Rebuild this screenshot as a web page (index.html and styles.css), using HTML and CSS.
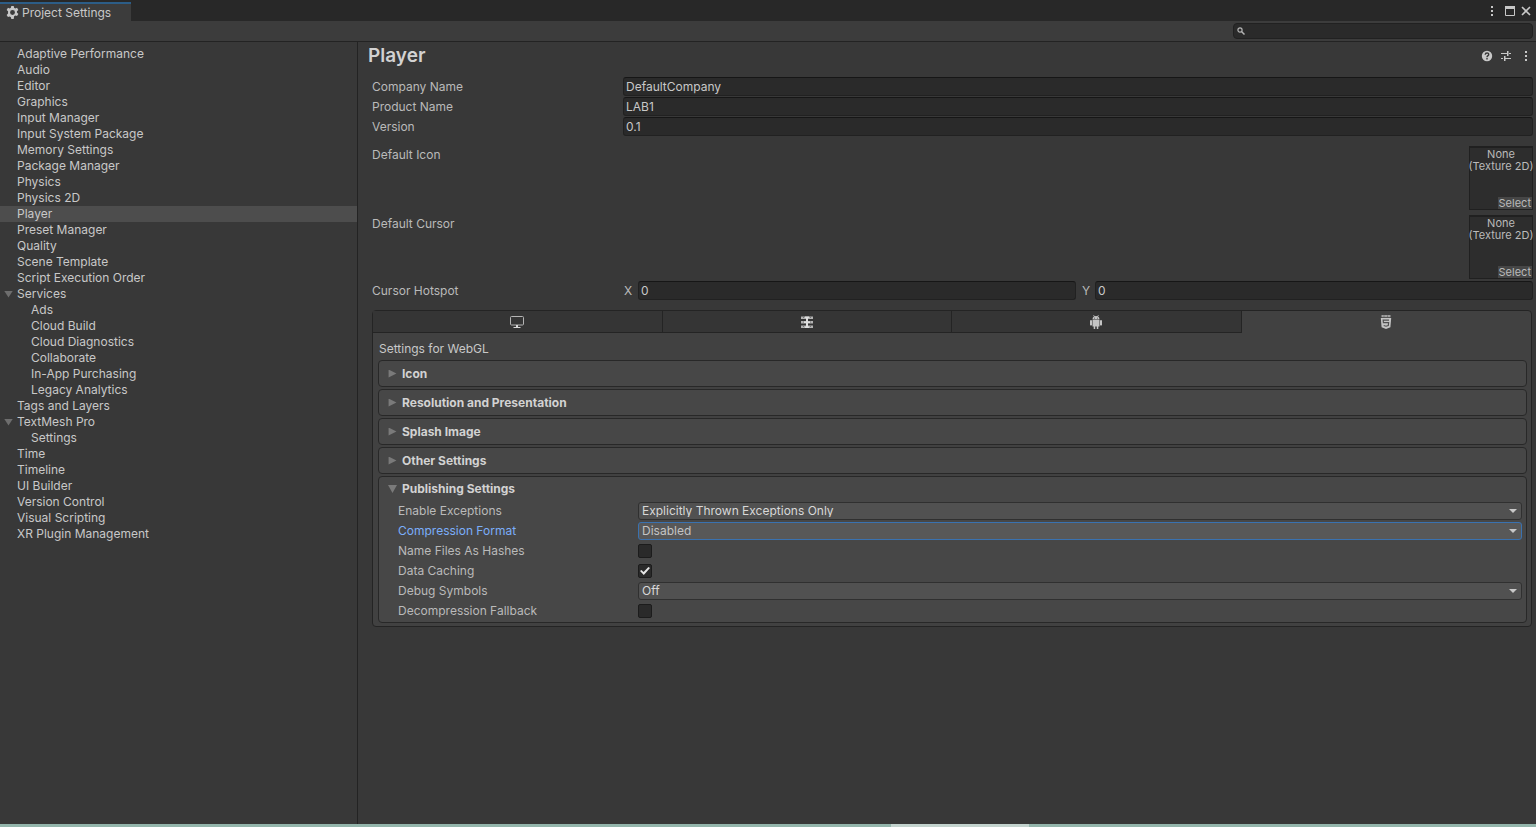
FILE: index.html
```
<!DOCTYPE html>
<html lang="en">
<head>
	<meta charset="UTF-8">
	<title>Project Settings</title>
	<link rel="stylesheet" href="styles.css">
</head>
<body>
	<header class="titlebar">
		<div class="window-tab">
			<svg width="13" height="13" viewBox="0 0 12 12"><path fill="#c8c8c8" fill-rule="evenodd" d="M4.9 0h2.2l.4 1.7 1 .5 1.7-.6 1.2 2-1.3 1.2v1.2l1.3 1.3-1.2 2-1.7-.5-1 .6L7.100 12H4.900l-.4-1.700-1-.6-1.700.5-1.200-2L1.900 6.900V4.800L.6 3.600l1.200-2 1.700.6 1-.5zM6 3.700a2.200 2.200 0 1 0 0 4.500 2.200 2.200 0 0 0 0-4.500z"/></svg>
			<span>Project Settings</span>
		</div>
		<div class="window-buttons">
			<button aria-label="Menu"><svg width="4" height="12" viewBox="0 0 4 12"><path fill="#c8c8c8" d="M1 1h2v2H1zM1 5h2v2H1zM1 9h2v2H1z"/></svg></button>
			<button aria-label="Maximize"><svg width="12" height="12" viewBox="0 0 12 12"><path fill="none" stroke="#c8c8c8" d="M1.500 1.500h9v9h-9z"/><path fill="#c8c8c8" d="M1 1h10v3H1z"/></svg></button>
			<button aria-label="Close"><svg width="10" height="10" viewBox="0 0 10 10"><path stroke="#c8c8c8" stroke-width="1.600" d="M1 1l8 8M9 1L1 9"/></svg></button>
		</div>
	</header>
	<div class="toolbar">
		<label class="search">
			<svg width="8" height="8" viewBox="0 0 8 8"><circle cx="3" cy="3" r="2.100" fill="none" stroke="#b4b4b4" stroke-width="1.200"/><path stroke="#b4b4b4" stroke-width="1.500" d="M4.500 4.500l3 3"/></svg>
			<input type="text" aria-label="Search">
		</label>
	</div>
	<div class="content">
		<nav class="sidebar">
			<a href="#">Adaptive Performance</a>
			<a href="#">Audio</a>
			<a href="#">Editor</a>
			<a href="#">Graphics</a>
			<a href="#">Input Manager</a>
			<a href="#">Input System Package</a>
			<a href="#">Memory Settings</a>
			<a href="#">Package Manager</a>
			<a href="#">Physics</a>
			<a href="#">Physics 2D</a>
			<a href="#" class="selected">Player</a>
			<a href="#">Preset Manager</a>
			<a href="#">Quality</a>
			<a href="#">Scene Template</a>
			<a href="#">Script Execution Order</a>
			<a href="#" class="group">Services</a>
			<a href="#" class="child">Ads</a>
			<a href="#" class="child">Cloud Build</a>
			<a href="#" class="child">Cloud Diagnostics</a>
			<a href="#" class="child">Collaborate</a>
			<a href="#" class="child">In-App Purchasing</a>
			<a href="#" class="child">Legacy Analytics</a>
			<a href="#">Tags and Layers</a>
			<a href="#" class="group">TextMesh Pro</a>
			<a href="#" class="child">Settings</a>
			<a href="#">Time</a>
			<a href="#">Timeline</a>
			<a href="#">UI Builder</a>
			<a href="#">Version Control</a>
			<a href="#">Visual Scripting</a>
			<a href="#">XR Plugin Management</a>
		</nav>
		<main class="inspector">
			<div class="heading">
				<h1>Player</h1>
				<div class="heading-buttons">
					<button aria-label="Help"><svg width="12" height="12" viewBox="0 0 12 12"><circle cx="6" cy="6" r="5.200" fill="#c8c8c8"/><path fill="none" stroke="#383838" stroke-width="1.400" d="M4.200 4.700C4.300 2.300 7.800 2.400 7.700 4.600 7.600 5.600 6 5.700 6 7.200"/><path fill="#383838" d="M5.300 8h1.400v1.400H5.300z"/></svg></button>
					<button aria-label="Presets"><svg width="12" height="12" viewBox="0 0 12 12"><path fill="#c8c8c8" d="M1 3h6v1H1zM7 1h1.500v5H7zM9 3h2v1H9zM1 8h2v1H1zM4 6h1.500v5H4zM5 8h6v1H5z"/></svg></button>
					<button aria-label="More"><svg width="4" height="12" viewBox="0 0 4 12"><path fill="#c8c8c8" d="M1 1h2v2H1zM1 5h2v2H1zM1 9h2v2H1z"/></svg></button>
				</div>
			</div>
			<div class="fields">
				<div class="row">
					<label for="company">Company Name</label>
					<input type="text" id="company" value="DefaultCompany">
				</div>
				<div class="row">
					<label for="product">Product Name</label>
					<input type="text" id="product" value="LAB1">
				</div>
				<div class="row">
					<label for="version">Version</label>
					<input type="text" id="version" value="0.1">
				</div>
				<div class="row texture-row icon-row">
					<span>Default Icon</span>
					<div class="texture"><span>None<br>(Texture 2D)</span><button>Select</button></div>
				</div>
				<div class="row texture-row cursor-row">
					<span>Default Cursor</span>
					<div class="texture"><span>None<br>(Texture 2D)</span><button>Select</button></div>
				</div>
				<div class="row">
					<span>Cursor Hotspot</span>
					<div class="vector">
						<label for="hotspot-x">X</label>
						<input type="text" id="hotspot-x" value="0">
						<label for="hotspot-y" class="second">Y</label>
						<input type="text" id="hotspot-y" value="0">
					</div>
				</div>
			</div>
			<section class="platforms">
				<div class="platform-tabs">
					<button aria-label="Standalone"><svg width="16" height="14" viewBox="0 0 16 14"><rect x="1.500" y="1.500" width="13" height="8.500" rx="1" fill="none" stroke="#b4b4b4"/><path fill="#d8d8d8" d="M7 10h2v2h2.500v1h-7v-1H7z"/></svg></button>
					<button aria-label="Dedicated Server"><svg width="14" height="14" viewBox="0 0 14 14"><path fill="#b4b4b4" d="M1 1.500h12v2.500H1zM1 6h12v2.500H1zM1 10.500h12V13H1z"/><path fill="#dedede" d="M5 1.500h4v1.500H8v8.500h1V13H5v-1.500h1V3H5zM4 6.500h6v1.500H4z"/><path fill="#777" d="M3 2h1v1H3zM10 2h1v1h-1zM3 6.500h1v1H3zM10 6.500h1v1h-1zM3 11h1v1H3zM10 11h1v1h-1z"/></svg></button>
					<button aria-label="Android"><svg width="14" height="16" viewBox="0 0 14 16"><path fill="#c4c4c4" d="M3.500 5.500C3.500 3.800 4.200 3 5 2.500L4.200 1.200l.6-.3.9 1.400a4 4 0 0 1 2.600 0L9.200.9l.6.3L9 2.500c.8.5 1.500 1.300 1.500 3zM3.500 6h7v6.500H9.300V15H7.800v-2.500H6.200V15H4.700v-2.500H3.500zM1 6.500q1-1 2 0V11q-1 1-2 0zM11 6.500q1-1 2 0V11q-1 1-2 0z"/><path fill="#444" d="M5 3.800h1v.8H5zM8 3.800h1v.8H8z"/></svg></button>
					<button class="active" aria-label="WebGL"><svg width="12" height="16" viewBox="0 0 12 16"><path fill="#a0a0a0" d="M1.500 1h9v2.200h-9z"/><path fill="#6a6a6a" d="M3.500 1.500h1v1.200h-1zM7 1.500h1v1.200H7z"/><path fill="#c4c4c4" d="M.8 4h10.400l-.8 9.200L6 15l-4.400-1.800z"/><path fill="none" stroke="#505050" stroke-width="1.200" d="M9 6.200H3.200l.2 2.500h5.200l-.3 2.800L6 12.200l-2.300-.7"/></svg></button>
				</div>
				<div class="platform-body">
					<h2>Settings for WebGL</h2>
					<details>
						<summary>Icon</summary>
					</details>
					<details>
						<summary>Resolution and Presentation</summary>
					</details>
					<details>
						<summary>Splash Image</summary>
					</details>
					<details>
						<summary>Other Settings</summary>
					</details>
					<details open>
						<summary>Publishing Settings</summary>
						<div class="publishing">
							<div class="option">
								<label for="exceptions">Enable Exceptions</label>
								<div class="dropdown"><select id="exceptions"><option>Explicitly Thrown Exceptions Only</option></select></div>
							</div>
							<div class="option focused">
								<label for="compression">Compression Format</label>
								<div class="dropdown"><select id="compression"><option>Disabled</option></select></div>
							</div>
							<div class="option">
								<label for="hashes">Name Files As Hashes</label>
								<input type="checkbox" id="hashes">
							</div>
							<div class="option">
								<label for="caching">Data Caching</label>
								<input type="checkbox" id="caching" checked>
							</div>
							<div class="option">
								<label for="symbols">Debug Symbols</label>
								<div class="dropdown"><select id="symbols"><option>Off</option></select></div>
							</div>
							<div class="option">
								<label for="fallback">Decompression Fallback</label>
								<input type="checkbox" id="fallback">
							</div>
						</div>
					</details>
				</div>
			</section>
		</main>
	</div>
	<footer class="desktop-edge"></footer>
</body>
</html>
```
FILE: styles.css
```
* {
	box-sizing: border-box;
}
body {
	margin: 0;
	min-height: 100vh;
	display: flex;
	flex-direction: column;
	background-color: #383838;
	color: #c8c8c8;
	font-family: Inter, "Liberation Sans", sans-serif;
	font-size: 12px;
	line-height: 16px;
}
button, input, select {
	font: inherit;
	color: inherit;
	margin: 0;
}
button {
	padding: 0;
	border: none;
	background: none;
}
svg {
	display: block;
}

/* window frame */
.titlebar {
	display: flex;
	justify-content: space-between;
	height: 21px;
	background-color: #282828;
}
.window-tab {
	display: flex;
	align-items: center;
	gap: 3px;
	margin-top: 2px;
	padding: 0 20px 0 6px;
	border-top: 2px solid #2c5d87;
	background-color: #3c3c3c;
}
.window-buttons {
	display: flex;
	align-items: center;
	gap: 10px;
	padding-right: 5px;
}
.window-buttons button:last-child {
	margin-left: -5px;
}
.toolbar {
	display: flex;
	justify-content: flex-end;
	height: 21px;
	padding: 2px 3px 2px 0;
	background-color: #3c3c3c;
	border-bottom: 1px solid #232323;
}
.search {
	display: flex;
	align-items: center;
	gap: 4px;
	width: 300px;
	height: 16px;
	padding: 0 3px;
	background-color: #2a2a2a;
	border: 1px solid #212121;
	border-radius: 4px;
}
.search input {
	flex: 1;
	min-width: 0;
	height: 12px;
	padding: 0;
	border: none;
	outline: none;
	background: none;
}
.content {
	flex: 1;
	display: flex;
}
.desktop-edge {
	height: 3px;
	background: linear-gradient(90deg, #93b5ab 58%, #c3d3ce 58%, #c3d3ce 67%, #93b5ab 67%);
}

/* category list */
.sidebar {
	flex: 0 0 358px;
	padding-top: 4px;
	border-right: 1px solid #232323;
}
.sidebar a {
	display: block;
	padding-left: 17px;
	color: #c8c8c8;
	text-decoration: none;
}
.sidebar .selected {
	background-color: #4d4d4d;
}
.sidebar .child {
	padding-left: 31px;
}
.sidebar .group {
	display: flex;
	align-items: center;
	gap: 4px;
	padding-left: 4px;
}
.sidebar .group::before {
	content: "";
	width: 9px;
	height: 7px;
	background-color: #6e6e6e;
	clip-path: polygon(0 0, 100% 0, 50% 100%);
}

/* player settings */
.inspector {
	flex: 1;
	min-width: 0;
}
.heading {
	display: flex;
	justify-content: space-between;
	align-items: center;
	height: 28px;
	padding: 0 8px 0 10px;
}
h1 {
	margin: 0;
	font-size: 19px;
	line-height: 24px;
	font-weight: 600;
	color: #d2d2d2;
}
.heading-buttons {
	display: flex;
	gap: 7px;
}
.heading-buttons button:last-child {
	margin-left: 5px;
}
.fields {
	display: flex;
	flex-direction: column;
	gap: 1px;
	padding: 7px 3px 0 14px;
	color: #bababa;
}
.row {
	display: grid;
	grid-template-columns: 251px 1fr;
	align-items: center;
}
.row input {
	width: 100%;
	height: 19px;
	padding: 0 2px;
	background-color: #2a2a2a;
	border: 1px solid #212121;
	border-top-color: #161616;
	border-radius: 3px;
	color: #c8c8c8;
}
.texture-row {
	align-items: start;
}
.icon-row {
	margin: 9px 0 4px;
}
.cursor-row {
	margin-bottom: 1px;
}
.texture-row > span {
	padding-top: 1px;
}
.texture {
	justify-self: end;
	display: flex;
	flex-direction: column;
	justify-content: space-between;
	align-items: center;
	width: 64px;
	height: 64px;
	background-color: #2d2d2d;
	border: 1px solid #202020;
	border-top-width: 2px;
	font-size: 11px;
	line-height: 12px;
	text-align: center;
	white-space: nowrap;
}
.texture button {
	align-self: flex-end;
	padding: 0 1px;
	background-color: #464646;
}
.vector {
	display: grid;
	grid-template-columns: 14px 1fr 19px 1fr;
	align-items: center;
	padding-left: 1px;
}
.vector .second {
	padding-left: 6px;
}

/* platform box */
.platforms {
	margin: 10px 4px 0 14px;
	background-color: #414141;
	border: 1px solid #242424;
	border-radius: 4px;
}
.platform-tabs {
	display: grid;
	grid-template-columns: repeat(4, 1fr);
}
.platform-tabs button {
	display: flex;
	align-items: center;
	justify-content: center;
	height: 22px;
	background-color: #353535;
	border-right: 1px solid #242424;
	border-bottom: 1px solid #242424;
}
.platform-tabs .active {
	background: none;
	border: none;
}
.platform-body {
	display: flex;
	flex-direction: column;
	gap: 2px;
	padding: 8px 4px 3px 5px;
}
h2 {
	margin: 0 0 1px 1px;
	font-size: 12px;
	font-weight: 400;
}
details {
	background-color: #474747;
	border: 1px solid #282828;
	border-radius: 4px;
}
summary {
	display: flex;
	align-items: center;
	gap: 5px;
	height: 25px;
	padding-left: 9px;
	font-weight: 700;
	color: #d2d2d2;
}
summary::before {
	content: "";
	width: 9px;
	height: 8px;
	background-color: #7a7a7a;
	clip-path: polygon(6% 0, 94% 50%, 6% 100%);
}
details[open] summary {
	height: 24px;
}
details[open] summary::before {
	clip-path: polygon(0 0, 100% 0, 50% 100%);
}
.publishing {
	padding: 0 4px 1px 19px;
	color: #bababa;
}
.option {
	display: grid;
	grid-template-columns: 240px 1fr;
	align-items: center;
	height: 20px;
}
.dropdown {
	display: grid;
	align-items: center;
}
.dropdown select {
	grid-area: 1 / 1;
	appearance: none;
	height: 18px;
	padding: 0 3px 2px;
	background-color: #515151;
	border: 1px solid #303030;
	border-radius: 3px;
	color: #d8d8d8;
	outline: none;
}
.dropdown::after {
	content: "";
	grid-area: 1 / 1;
	justify-self: end;
	width: 8px;
	height: 4px;
	margin-right: 5px;
	background-color: #c8c8c8;
	clip-path: polygon(0 0, 100% 0, 50% 100%);
	pointer-events: none;
}
.focused label {
	color: #7baefa;
}
.focused select {
	background-color: #585858;
	border-color: #3a72b0;
	color: #c4c4c4;
}
.option input {
	appearance: none;
	display: grid;
	place-items: center;
	width: 14px;
	height: 14px;
	background-color: #2a2a2a;
	border: 1px solid #1c1c1c;
	border-radius: 2px;
}
.option input:checked::before {
	content: "";
	width: 10px;
	height: 8px;
	background-color: #e6e6e6;
	clip-path: polygon(0 50%, 14% 36%, 36% 62%, 84% 0, 100% 14%, 38% 100%);
}
```
